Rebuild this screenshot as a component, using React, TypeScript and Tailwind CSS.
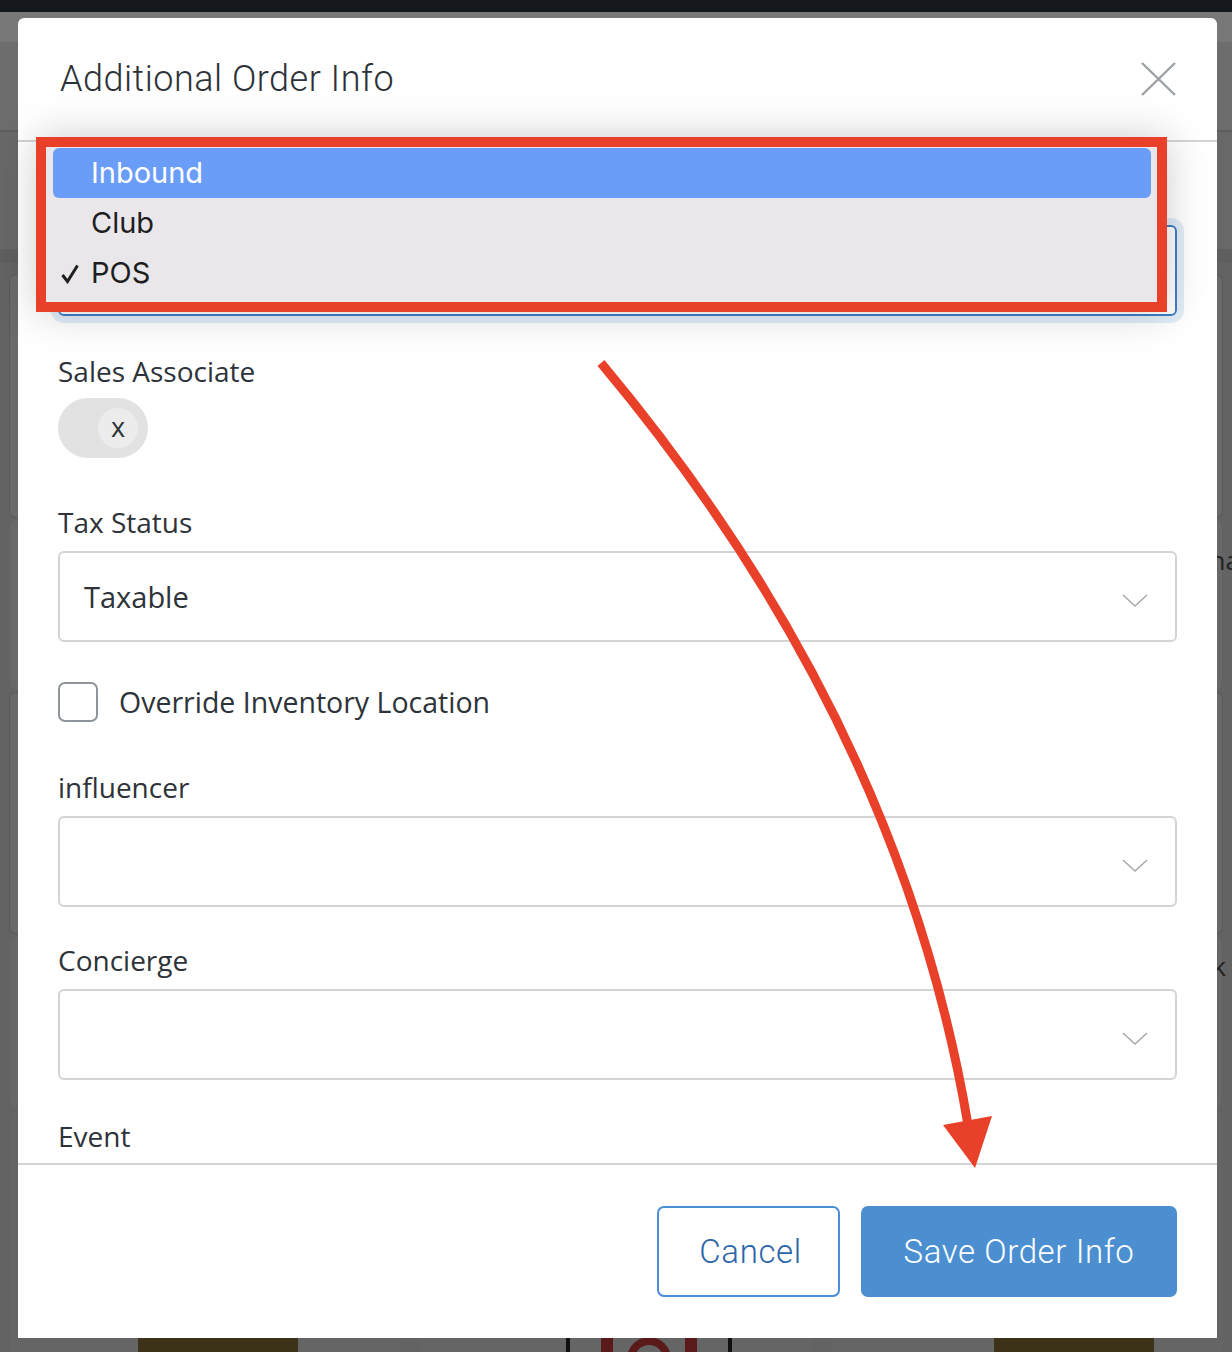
import type { ReactNode } from "react";

function Chevron() {
  return (
    <svg width="26" height="14" viewBox="0 0 26 14" className="mt-[8px]">
      <polyline points="1,1 13,12 25,1" fill="none" stroke="#a3a6aa" strokeWidth="1.4" />
    </svg>
  );
}

function Label({ children, className = "" }: { children?: ReactNode; className?: string }) {
  return <div className={`h-[36px] shrink-0 text-[28px] leading-[36px] text-[#2d3338] ${className}`}>{children}</div>;
}

function SelectBox({ value, focused = false, className = "" }: { value?: string; focused?: boolean; className?: string }) {
  return (
    <div
      className={`flex h-[91px] shrink-0 items-center justify-between rounded-[6px] border-2 pl-[24px] pr-[27px] ${
        focused
          ? "border-[#3f7fc2] shadow-[0_0_0_7px_rgba(74,143,214,0.16)]"
          : "border-[#d4d4d4]"
      } ${className}`}
    >
      <span className="text-[29px] text-[#2d3338]">{value}</span>
      <Chevron />
    </div>
  );
}

const bottleLeft = ["left-[128px]", "left-[145px]", "left-[163px]"];

export default function App() {
  return (
    <div className="relative h-[1352px] w-[1232px] overflow-hidden bg-[#636363] font-['Open_Sans',sans-serif]">
      {/* Dimmed page behind the dialog */}
      <div className="h-[12px] bg-[#15191d]" />
      <div className="h-[31px] border-b border-[#6a6a6a] bg-[#787878]" />
      <div className="h-[89px] border-b-2 border-[#5d5d5d] bg-[#6d6d6d]" />
      <div className="h-[131px] border-b-[14px] border-[#5f5f5f] bg-[#686868]" />
      <div className="grid grid-cols-3 gap-[20px] px-[10px] pt-[12px]">
        {[0, 1, 2].map((col) => (
          <div key={col} className="flex flex-col gap-[4px]">
            <div className="h-[242px] rounded-[6px] bg-[#6a6a6a] shadow-[0_0_0_1px_#5a5a5a]" />
            <div className="flex h-[168px] items-start justify-end rounded-[6px] bg-[#686868] pt-[20px] text-[26px] text-[#222]">
              {col === 2 && <span className="-mr-[18px]">na</span>}
            </div>
            <div className="h-[240px] rounded-[6px] bg-[#696969] shadow-[0_0_0_1px_#5a5a5a]" />
            <div className="flex h-[170px] items-start justify-end rounded-[6px] bg-[#676767] pt-[10px] text-[26px] text-[#222]">
              {col === 2 && <span className="-mr-[4px]">k</span>}
            </div>
            <div className="relative h-[250px] rounded-[6px] bg-[#656565]">
              {col !== 1 ? (
                <div className={`absolute bottom-0 ${bottleLeft[col]} h-[40px] w-[160px] bg-[#3b3218]`} />
              ) : (
                <div className={`absolute bottom-0 ${bottleLeft[col]} flex h-[40px] w-[166px] items-end justify-center gap-[14px] border-x-[4px] border-[#111]`}>
                  <div className="h-[24px] w-[12px] bg-[#5a1a1a]" />
                  <div className="h-[24px] w-[44px] rounded-t-full border-[8px] border-b-0 border-[#5a1a1a]" />
                  <div className="h-[24px] w-[12px] bg-[#5a1a1a]" />
                </div>
              )}
            </div>
          </div>
        ))}
      </div>

      {/* Dialog */}
      <div className="absolute left-[18px] top-[18px] flex h-[1320px] w-[1199px] flex-col overflow-hidden rounded-t-[6px] bg-white">
        <div className="flex h-[124px] shrink-0 items-center justify-between border-b-2 border-[#d4d4d4] pl-[42px] pr-[41px]">
          <h2 className="font-['Roboto',sans-serif] text-[36px] font-light tracking-[0.5px] text-[#2d3238]">Additional Order Info</h2>
          <svg width="35" height="34" viewBox="0 0 35 34">
            <line x1="1" y1="1" x2="34" y2="33" stroke="#9ca0a5" strokeWidth="2.4" />
            <line x1="34" y1="1" x2="1" y2="33" stroke="#9ca0a5" strokeWidth="2.4" />
          </svg>
        </div>

        <div className="flex min-h-0 flex-1 flex-col overflow-hidden px-[40px] pt-[35px]">
          <Label />
          <SelectBox focused className="mt-[12px]" />

          <Label className="mt-[37px]">Sales Associate</Label>
          <div className="mt-[9px] flex h-[60px] w-[90px] shrink-0 items-center rounded-full bg-[#e2e2e2] pl-[40px]">
            <div className="flex h-[40px] w-[40px] items-center justify-center rounded-full bg-[#ececec] pb-[1px] text-[27px] text-[#2d3338]">
              x
            </div>
          </div>

          <Label className="mt-[46px]">Tax Status</Label>
          <SelectBox value="Taxable" className="mt-[11px]" />

          <div className="mt-[40px] flex h-[40px] shrink-0 items-center gap-[21px]">
            <div className="h-[40px] w-[40px] rounded-[7px] border-2 border-[#8e949b]" />
            <span className="text-[28.5px] text-[#2d3338]">Override Inventory Location</span>
          </div>

          <Label className="mt-[47px]">influencer</Label>
          <SelectBox className="mt-[11px]" />

          <Label className="mt-[35px]">Concierge</Label>
          <SelectBox className="mt-[11px]" />

          <Label className="mt-[38px]">Event</Label>
          <SelectBox className="mt-[9px]" />
        </div>

        <div className="flex h-[175px] shrink-0 items-center justify-end gap-[21px] border-t-2 border-[#d4d4d4] pr-[40px] font-['Roboto',sans-serif] text-[33px] font-light tracking-[0.6px]">
          <button className="h-[91px] w-[183px] rounded-[7px] border-2 border-[#4a8fd6] pl-[4px] text-[#2b65a9]">Cancel</button>
          <button className="h-[91px] w-[316px] rounded-[7px] bg-[#4b8fd1] text-white">Save Order Info</button>
        </div>
      </div>

      {/* Native select menu, outlined in red */}
      <div className="absolute left-[36px] top-[137px] h-[175px] w-[1131px] border-[10px] border-[#e9402a] bg-[#e9e7ea] pl-[7px] pr-[6px] pt-[1px] font-['Inter',sans-serif] text-[29px] shadow-[0_0_40px_rgba(0,0,0,0.2)]">
        {["Inbound", "Club", "POS"].map((opt, i) => (
          <div
            key={opt}
            className={`relative flex h-[50px] items-center rounded-[6px] pl-[38px] ${
              i === 0 ? "bg-[#6a9df8] text-white" : "text-[#1e1e1e]"
            }`}
          >
            {opt === "POS" && (
              <svg width="18" height="20" viewBox="0 0 18 20" className="absolute left-[8px] top-[16px]">
                <polyline points="1.5,11 6.5,17.5 16.5,1.5" fill="none" stroke="#1e1e1e" strokeWidth="3" />
              </svg>
            )}
            {opt}
          </div>
        ))}
      </div>

      {/* Annotation arrow */}
      <svg className="pointer-events-none absolute left-0 top-0" width="1232" height="1352" viewBox="0 0 1232 1352">
        <path d="M601 363 Q 900 720 968 1125" fill="none" stroke="#e9402a" strokeWidth="9" />
        <polygon points="943,1125 992,1116 975,1168" fill="#e9402a" />
      </svg>
    </div>
  );
}
